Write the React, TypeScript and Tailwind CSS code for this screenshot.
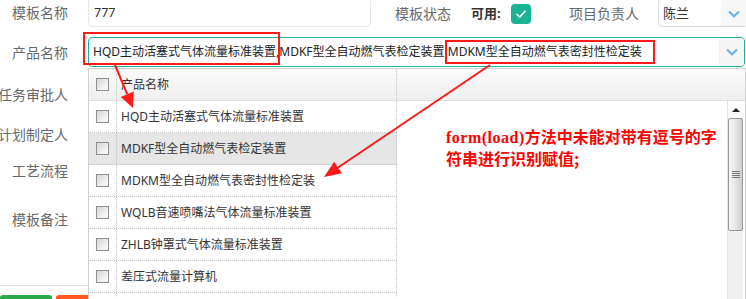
import React from "react";

const items = [
  "HQD主动活塞式气体流量标准装置",
  "MDKF型全自动燃气表检定装置",
  "MDKM型全自动燃气表密封性检定装",
  "WQLB音速喷嘴法气体流量标准装置",
  "ZHLB钟罩式气体流量标准装置",
  "差压式流量计算机",
  "",
];

function Chevron() {
  return (
    <svg width="12" height="8" viewBox="0 0 12 8">
      <polyline points="1,1.5 6,6.2 11,1.5" fill="none" stroke="#6cb2ea" strokeWidth="2.2" />
    </svg>
  );
}

function Box() {
  return <div className="w-[13px] h-[13px] shrink-0 border border-[#8e8f8f] bg-linear-to-br from-[#d8d8d8] to-[#fdfdfd]" />;
}

function Label({ children }: { children: React.ReactNode }) {
  return (
    <div className="w-[68px] shrink-0 flex justify-end whitespace-nowrap text-[14px] text-[#676a6c]">
      {children}
    </div>
  );
}

export default function App() {
  return (
    <div className="relative w-[746px] h-[299px] overflow-hidden bg-white text-[#333] font-['Noto_Sans','Noto_Sans_CJK_SC',sans-serif]">
      <div className="flex flex-col">
        {/* Row 1 */}
        <div className="flex items-center h-[29px] -mt-[2px]">
          <Label>模板名称</Label>
          <div className="ml-[20px] w-[283px] h-[29px] shrink-0 border border-[#e5e6e7] rounded-[4px] flex items-center pl-[5px] pt-[2px] text-[12.5px]">
            777
          </div>
          <div className="ml-[24px] w-[56px] shrink-0 whitespace-nowrap text-[14px] text-[#676a6c] pt-[2px]">模板状态</div>
          <div className="ml-[20px] w-[40px] shrink-0 whitespace-nowrap text-[13px] font-bold text-[#333] pt-[2px]">可用:</div>
          <div className="w-[20px] h-[20px] shrink-0 rounded-[4px] bg-[#1ab394] flex items-center justify-center mt-[3px]">
            <svg width="12" height="10" viewBox="0 0 12 10">
              <polyline points="1.5,5 4.8,8 10.5,1.8" fill="none" stroke="#fff" strokeWidth="1.6" />
            </svg>
          </div>
          <div className="ml-[38px] w-[70px] shrink-0 whitespace-nowrap text-[14px] text-[#676a6c] pt-[2px]">项目负责人</div>
          <div className="ml-[19px] w-[90px] h-[29px] shrink-0 border border-[#d9d9d9] rounded-[4px] flex overflow-hidden">
            <div className="w-[62px] flex items-center pl-[4px] pt-[2px] text-[13px] text-[#333]">陈兰</div>
            <div className="w-[26px] flex items-center justify-center bg-[#f7f7f7] pt-[2px]">
              <Chevron />
            </div>
          </div>
        </div>

        {/* Row 2 */}
        <div className="flex items-center h-[30px] mt-[10px]">
          <Label>产品名称</Label>
          <div className="ml-[20px] w-[657px] h-[30px] shrink-0 border border-[#1ab394] rounded-[4px] flex overflow-hidden">
            <div className="flex-1 flex items-center pl-[4px] text-[12px] whitespace-nowrap overflow-hidden text-[#222]">
              HQD主动活塞式气体流量标准装置,MDKF型全自动燃气表检定装置,MDKM型全自动燃气表密封性检定装
            </div>
            <div className="w-[25px] flex items-center justify-center bg-[#f5f5f5]">
              <Chevron />
            </div>
          </div>
        </div>

        {/* Remaining labels */}
        <div className="flex items-center h-[40px] mt-[7px]">
          <Label>任务审批人</Label>
        </div>
        <div className="flex items-center h-[40px]">
          <Label>计划制定人</Label>
        </div>
        <div className="flex items-center h-[32px]">
          <Label>工艺流程</Label>
        </div>
        <div className="flex items-center h-[66px]">
          <Label>模板备注</Label>
        </div>
        <div className="h-[34px] border-b border-[#e0e0e0]" />
        <div className="flex mt-[9px]">
          <div className="w-[52px] h-[30px] rounded-t-[3px] bg-[#2aa84a]" />
          <div className="ml-[4px] w-[60px] h-[30px] rounded-t-[3px] bg-[#ff5722]" />
        </div>
      </div>

      {/* Dropdown panel */}
      <div className="absolute left-[88px] top-[68px] w-[658px] h-[240px] border border-[#d0d0d0] bg-white flex flex-col">
        <div className="h-[32px] shrink-0 border-b border-[#dddddd] bg-linear-to-b from-[#fbfbfb] to-[#eeeeee] flex">
          <div className="w-[28px] shrink-0 border-r border-dotted border-[#c4c4c4] flex items-center justify-center">
            <Box />
          </div>
          <div className="w-[280px] shrink-0 border-r border-dotted border-[#c4c4c4] flex items-center pl-[4px] text-[12px] text-[#333]">
            产品名称
          </div>
        </div>
        <div className="flex flex-1 min-h-0">
          <div className="w-[308px] shrink-0 flex flex-col">
            {items.map((t, i) => (
              <div
                key={i}
                className={
                  "h-[32px] shrink-0 border-b border-dotted border-[#c4c4c4] flex " +
                  (i === 1 ? "bg-[#e6e6e6]" : "bg-white")
                }
              >
                <div className="w-[28px] shrink-0 border-r border-dotted border-[#c4c4c4] flex items-center justify-center">
                  {t ? <Box /> : null}
                </div>
                <div className="w-[280px] shrink-0 border-r border-dotted border-[#c4c4c4] flex items-center pl-[4px] text-[12px] text-[#333] whitespace-nowrap">
                  {t}
                </div>
              </div>
            ))}
          </div>
          <div className="flex-1" />
          <div className="w-[16px] mr-[2px] shrink-0 flex flex-col bg-[#f0f0f0] border-l border-[#e2e2e2]">
            <div className="h-[17px] shrink-0 bg-[#fbfbfb] flex items-center justify-center">
              <div className="w-0 h-0 border-l-[4px] border-r-[4px] border-b-[4px] border-l-transparent border-r-transparent border-b-[#222]" />
            </div>
            <div className="h-[113px] shrink-0 border border-[#979797] rounded-[2px] bg-linear-to-r from-[#f6f6f6] via-[#e6e6e6] to-[#cfcfcf] flex flex-col items-center justify-center gap-[1px]">
              <div className="w-[8px] h-[1px] bg-[#777]" />
              <div className="w-[8px] h-[1px] bg-[#777]" />
              <div className="w-[8px] h-[1px] bg-[#777]" />
              <div className="w-[8px] h-[1px] bg-[#777]" />
            </div>
          </div>
        </div>
      </div>

      {/* Annotation overlay */}
      <svg className="absolute left-0 top-0 pointer-events-none" width="746" height="299" viewBox="0 0 746 299">
        <rect x="84" y="33" width="195" height="31" fill="none" stroke="#ff1a1a" strokeWidth="2" />
        <rect x="446" y="41" width="208" height="22" fill="none" stroke="#ff1a1a" strokeWidth="2" />
        <line x1="115" y1="65" x2="127.2" y2="94.2" stroke="#ff1a1a" strokeWidth="2" />
        <polygon points="133,108 120.7,96.9 133.7,91.5" fill="#ff1a1a" />
        <line x1="490" y1="65" x2="338.1" y2="167.5" stroke="#ff1a1a" strokeWidth="2" />
        <polygon points="324,177 334.2,161.7 342,173.3" fill="#ff1a1a" />
      </svg>
      <div className="absolute left-[446px] top-[126px] text-[16px] leading-[21px] font-bold text-[#ff0000] whitespace-nowrap font-['Noto_Sans_CJK_SC',sans-serif]">
        <div>
          <span className="font-['Liberation_Serif',serif] text-[16px] tracking-[0.5px]">form(load)</span>方法中未能对带有逗号的字
        </div>
        <div>符串进行识别赋值;</div>
      </div>
    </div>
  );
}
